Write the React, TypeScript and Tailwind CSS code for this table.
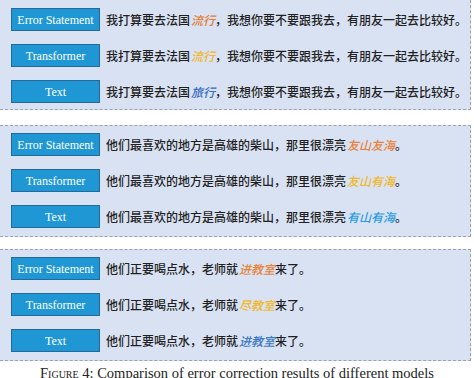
import React from 'react';

type Row = { label: string; before: string; mark: string; after: string; color: string };

const panels: Row[][] = [
  [
    { label: 'Error Statement', before: '我打算要去法国', mark: '流行', after: '，我想你要不要跟我去，有朋友一起去比较好。', color: '#e27b35' },
    { label: 'Transformer', before: '我打算要去法国', mark: '流行', after: '，我想你要不要跟我去，有朋友一起去比较好。', color: '#f2b52c' },
    { label: 'Text', before: '我打算要去法国', mark: '旅行', after: '，我想你要不要跟我去，有朋友一起去比较好。', color: '#3a6cbc' },
  ],
  [
    { label: 'Error Statement', before: '他们最喜欢的地方是高雄的柴山，那里很漂亮', mark: '友山友海', after: '。', color: '#e8823a' },
    { label: 'Transformer', before: '他们最喜欢的地方是高雄的柴山，那里很漂亮', mark: '友山有海', after: '。', color: '#f0b82a' },
    { label: 'Text', before: '他们最喜欢的地方是高雄的柴山，那里很漂亮', mark: '有山有海', after: '。', color: '#2a9ee0' },
  ],
  [
    { label: 'Error Statement', before: '他们正要喝点水，老师就', mark: '进教室', after: '来了。', color: '#e8823a' },
    { label: 'Transformer', before: '他们正要喝点水，老师就', mark: '尽教室', after: '来了。', color: '#f0b82a' },
    { label: 'Text', before: '他们正要喝点水，老师就', mark: '进教室', after: '来了。', color: '#3a78c4' },
  ],
];

const cjk = { fontFamily: '"Noto Sans CJK SC", "Noto Sans", sans-serif' };
const serif = { fontFamily: '"Liberation Serif", "DejaVu Serif", serif' };

function PanelRow({ row }: { row: Row }) {
  return (
    <div className="flex items-center h-[23px]">
      <div
        className="ml-[11px] w-[89px] h-[23px] flex items-center justify-center bg-[#1f97d4] border border-[#25699a] text-white text-[12px] leading-none shrink-0"
        style={serif}
      >
        {row.label}
      </div>
      <div className="ml-[6px] text-[12px] font-medium text-[#1f1f1f] whitespace-nowrap leading-none" style={cjk}>
        {row.before}
        <span className="italic ml-[1px]" style={{ color: row.color }}>{row.mark}</span>
        {row.after}
      </div>
    </div>
  );
}

export default function App() {
  return (
    <div className="w-[474px] h-[378px] bg-white overflow-hidden">
      {panels.map((rows, i) => (
        <div
          key={i}
          className={
            i === 0
              ? 'w-[471px] bg-[#d9e2f3] border-r border-b border-dashed border-[#9aa3b3] pt-[8px] pb-[6px] flex flex-col gap-[13px]'
              : i === 1
              ? 'mt-[15px] w-[471px] bg-[#d9e2f3] border-y border-r border-dashed border-[#9aa3b3] pt-[7px] pb-[8px] flex flex-col gap-[13px]'
              : 'mt-[12px] w-[471px] bg-[#d9e2f3] border-y border-r border-dashed border-[#9aa3b3] pt-[7px] pb-[8px] flex flex-col gap-[13px]'
          }
        >
          {rows.map((r, j) => (
            <PanelRow key={j} row={r} />
          ))}
        </div>
      ))}
      <div className="mt-[5px] text-center text-[14.5px] text-[#222] leading-none whitespace-nowrap" style={serif}>
        <span className="[font-variant:small-caps]">Figure 4</span>: Comparison of error correction results of different models
      </div>
    </div>
  );
}
